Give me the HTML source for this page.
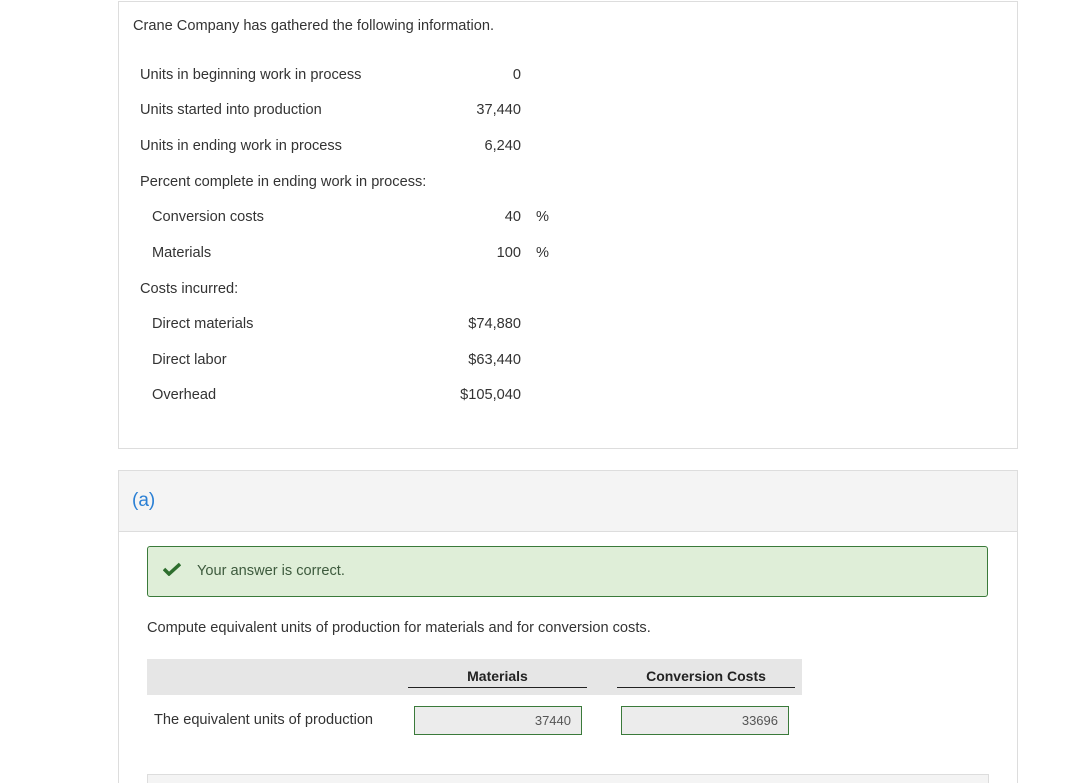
<!DOCTYPE html>
<html><head><style>
html,body{margin:0;width:1075px;height:783px;overflow:hidden}
body{background:#fff;font-family:"Liberation Sans",sans-serif;font-size:14.6px;color:#333;position:relative}
.a{position:absolute;white-space:nowrap;line-height:18px}
.r{text-align:right}
</style></head><body>
<div class="a" style="left:118px;top:1px;width:898px;height:446px;border:1px solid #ddd"></div>
<div class="a" style="left:133px;top:17px">Crane Company has gathered the following information.</div>
<div class="a" style="left:140px;top:66px">Units in beginning work in process</div><div class="a r" style="left:421px;width:100px;top:66px">0</div>
<div class="a" style="left:140px;top:101px">Units started into production</div><div class="a r" style="left:421px;width:100px;top:101px">37,440</div>
<div class="a" style="left:140px;top:137px">Units in ending work in process</div><div class="a r" style="left:421px;width:100px;top:137px">6,240</div>
<div class="a" style="left:140px;top:173px">Percent complete in ending work in process:</div>
<div class="a" style="left:152px;top:208px">Conversion costs</div><div class="a r" style="left:421px;width:100px;top:208px">40</div><div class="a" style="left:536px;top:208px">%</div>
<div class="a" style="left:152px;top:244px">Materials</div><div class="a r" style="left:421px;width:100px;top:244px">100</div><div class="a" style="left:536px;top:244px">%</div>
<div class="a" style="left:140px;top:280px">Costs incurred:</div>
<div class="a" style="left:152px;top:315px">Direct materials</div><div class="a r" style="left:421px;width:100px;top:315px">$74,880</div>
<div class="a" style="left:152px;top:351px">Direct labor</div><div class="a r" style="left:421px;width:100px;top:351px">$63,440</div>
<div class="a" style="left:152px;top:386px">Overhead</div><div class="a r" style="left:421px;width:100px;top:386px">$105,040</div>

<div class="a" style="left:118px;top:470px;width:898px;height:320px;border:1px solid #ddd;border-bottom:none"></div>
<div class="a" style="left:119px;top:471px;width:898px;height:60px;background:#f4f4f4;border-bottom:1px solid #ddd"></div>
<div class="a" style="left:132px;top:490px;font-size:19px;line-height:22px;color:#2a7fd4">(a)</div>
<div class="a" style="left:147px;top:546px;width:839px;height:49px;background:#dfeed8;border:1px solid #3a7a3a;border-radius:3px"></div>
<svg class="a" style="left:163px;top:562px" width="18" height="14" viewBox="0 0 18 14"><path d="M1 7l5 5L17 2" fill="none" stroke="#2e6e2e" stroke-width="3.5"/></svg>
<div class="a" style="left:197px;top:562px;color:#3d5a3d">Your answer is correct.</div>
<div class="a" style="left:147px;top:619px">Compute equivalent units of production for materials and for conversion costs.</div>
<div class="a" style="left:147px;top:659px;width:655px;height:36px;background:#e6e6e6"></div>
<div class="a" style="left:408px;top:667px;width:179px;text-align:center;border-bottom:1px solid #222;padding-bottom:2px;color:#222;font-weight:bold;font-size:14px">Materials</div>
<div class="a" style="left:617px;top:667px;width:178px;text-align:center;border-bottom:1px solid #222;padding-bottom:2px;color:#222;font-weight:bold;font-size:14px">Conversion Costs</div>
<div class="a" style="left:154px;top:711px">The equivalent units of production</div>
<div class="a r" style="left:414px;top:706px;width:156px;height:27px;line-height:27px;padding-right:10px;background:#ececec;border:1px solid #3a7a3a;font-size:13px;color:#555">37440</div>
<div class="a r" style="left:621px;top:706px;width:156px;height:27px;line-height:27px;padding-right:10px;background:#ececec;border:1px solid #3a7a3a;font-size:13px;color:#555">33696</div>
<div class="a" style="left:147px;top:774px;width:840px;height:20px;background:#f4f4f4;border:1px solid #ddd"></div>
</body></html>
